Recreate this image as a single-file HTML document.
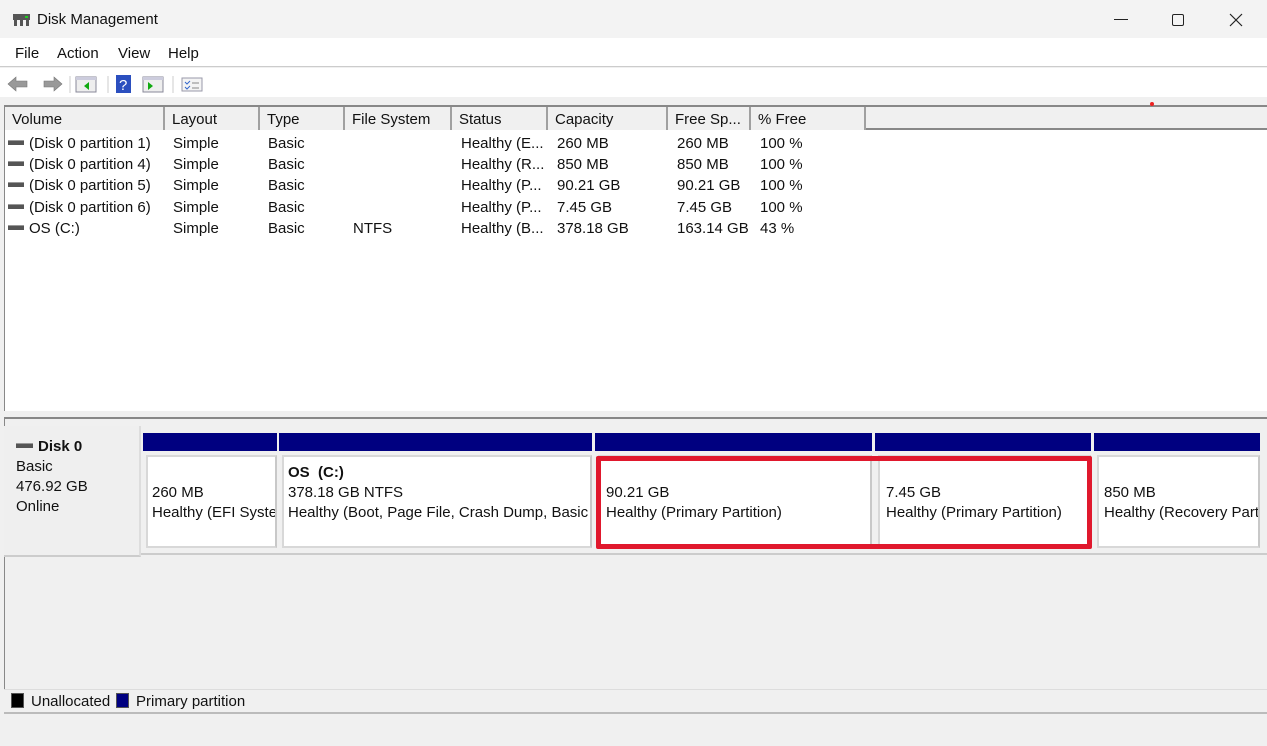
<!DOCTYPE html>
<html><head><style>
*{margin:0;padding:0;box-sizing:border-box}
body{width:1267px;height:746px;overflow:hidden;background:#f0f0f0;font-family:"Liberation Sans",sans-serif;font-size:15px;color:#111;position:relative}
.a{position:absolute;white-space:nowrap}
.hd{position:absolute;top:107px;height:23px;border-right:2px solid #a0a0a0;padding:4px 0 0 7px;background:#f0f0f0}
.bar{position:absolute;top:433px;height:18px;background:#000080}
.box{position:absolute;top:455px;height:93px;background:#fff;border:2px solid #d8d8d8;border-right-color:#c8c8c8;padding:26px 0 0 4px;overflow:hidden;line-height:20px;white-space:nowrap}
.icn{display:inline-block;width:16px;height:5px;background:#555;border-top:1px solid #999;position:relative;top:-3px;margin-right:5px}
</style></head><body>
<div class="a" style="left:0;top:0;width:1267px;height:38px;background:#f3f3f3"></div>
<svg class="a" style="left:12px;top:12px" width="20" height="16"><rect x="1" y="2" width="17" height="6" fill="#555"/><rect x="13" y="4" width="3" height="2" fill="#2c2"/><rect x="2" y="8" width="3" height="6" fill="#555"/><rect x="8" y="8" width="3" height="6" fill="#555"/><rect x="14" y="8" width="3" height="6" fill="#555"/></svg>
<div class="a" style="left:37px;top:11px;font-size:15px">Disk Management</div>
<div class="a" style="left:1114px;top:19px;width:14px;height:1px;background:#222"></div>
<div class="a" style="left:1172px;top:14px;width:12px;height:12px;border:1.3px solid #222;border-radius:2px"></div>
<svg class="a" style="left:1229px;top:13px" width="14" height="14"><path d="M1 1L13 13M13 1L1 13" stroke="#222" stroke-width="1.2"/></svg>
<div class="a" style="left:0;top:38px;width:1267px;height:29px;background:#fff;border-bottom:1px solid #ccc"></div>
<div class="a" style="left:15px;top:45px">File</div>
<div class="a" style="left:57px;top:45px">Action</div>
<div class="a" style="left:118px;top:45px">View</div>
<div class="a" style="left:168px;top:45px">Help</div>
<div class="a" style="left:0;top:68px;width:1267px;height:29px;background:#fff"></div>
<svg class="a" style="left:7px;top:74px" width="200" height="20">
<path d="M1 10L9 3V7H20V13H9V17Z" fill="#999" stroke="#777" stroke-width="0.6"/><path d="M55 10L47 3V7H37V13H47V17Z" fill="#999" stroke="#777" stroke-width="0.6"/>
<line x1="63" y1="2" x2="63" y2="19" stroke="#ccc"/>
<rect x="69" y="3" width="20" height="15" fill="#eee" stroke="#889"/><rect x="69" y="3" width="20" height="3" fill="#ccd"/><path d="M82 8V16L77 12Z" fill="#1a1"/>
<line x1="101" y1="2" x2="101" y2="19" stroke="#ccc"/>
<rect x="109" y="1" width="15" height="18" fill="#2b4fbf"/><text x="112" y="16" fill="#fff" font-size="15" font-family="Liberation Sans">?</text>
<rect x="136" y="3" width="20" height="15" fill="#eee" stroke="#889"/><rect x="136" y="3" width="20" height="3" fill="#ccd"/><path d="M141 8V16L146 12Z" fill="#1a1"/>
<line x1="166" y1="2" x2="166" y2="19" stroke="#ccc"/>
<rect x="175" y="4" width="20" height="13" fill="#f4f4f4" stroke="#99a"/><path d="M178 8l2 2 3-3M178 13l2 2 3-3" stroke="#36c" fill="none"/><path d="M185 9h7M185 14h7" stroke="#888"/>
</svg>
<div class="a" style="left:4px;top:105px;width:1263px;height:306px;background:#fff;border-top:2px solid #888;border-left:1px solid #888"></div>
<div class="a" style="left:5px;top:107px;width:1262px;height:23px;background:#f0f0f0;border-bottom:2px solid #888"></div>
<div class="hd" style="left:5px;width:160px">Volume</div>
<div class="hd" style="left:165px;width:95px">Layout</div>
<div class="hd" style="left:260px;width:85px">Type</div>
<div class="hd" style="left:345px;width:107px">File System</div>
<div class="hd" style="left:452px;width:96px">Status</div>
<div class="hd" style="left:548px;width:120px">Capacity</div>
<div class="hd" style="left:668px;width:83px">Free Sp...</div>
<div class="hd" style="left:751px;width:115px">% Free</div>
<div class="a" style="left:1150px;top:102px;width:4px;height:4px;border-radius:2px;background:#e22"></div>
<div class="a" style="left:8px;top:133px;line-height:21.2px">
<div><span class="icn"></span>(Disk 0 partition 1)</div>
<div><span class="icn"></span>(Disk 0 partition 4)</div>
<div><span class="icn"></span>(Disk 0 partition 5)</div>
<div><span class="icn"></span>(Disk 0 partition 6)</div>
<div><span class="icn"></span>OS (C:)</div></div>
<div class="a" style="left:173px;top:133px;line-height:21.2px">Simple<br>Simple<br>Simple<br>Simple<br>Simple</div>
<div class="a" style="left:268px;top:133px;line-height:21.2px">Basic<br>Basic<br>Basic<br>Basic<br>Basic</div>
<div class="a" style="left:353px;top:133px;line-height:21.2px">&nbsp;<br>&nbsp;<br>&nbsp;<br>&nbsp;<br>NTFS</div>
<div class="a" style="left:461px;top:133px;line-height:21.2px">Healthy (E...<br>Healthy (R...<br>Healthy (P...<br>Healthy (P...<br>Healthy (B...</div>
<div class="a" style="left:557px;top:133px;line-height:21.2px">260 MB<br>850 MB<br>90.21 GB<br>7.45 GB<br>378.18 GB</div>
<div class="a" style="left:677px;top:133px;line-height:21.2px">260 MB<br>850 MB<br>90.21 GB<br>7.45 GB<br>163.14 GB</div>
<div class="a" style="left:760px;top:133px;line-height:21.2px">100 %<br>100 %<br>100 %<br>100 %<br>43 %</div>
<div class="a" style="left:4px;top:411px;width:1263px;height:8px;background:#f0f0f0;border-bottom:2px solid #888"></div>
<div class="a" style="left:4px;top:419px;width:1263px;height:271px;background:#f0f0f0;border-left:1px solid #888"></div>
<div class="a" style="left:4px;top:426px;width:137px;height:131px;background:#efefef;border-right:2px solid #ddd;border-bottom:2px solid #ccc"></div>
<div class="a" style="left:16px;top:437px;line-height:20px"><span class="icn" style="width:17px"></span><b>Disk 0</b><br>Basic<br>476.92 GB<br>Online</div>
<div class="a" style="left:141px;top:553px;width:1126px;height:2px;background:#ccc"></div>
<div class="bar" style="left:143px;width:134px"></div>
<div class="bar" style="left:279px;width:313px"></div>
<div class="bar" style="left:595px;width:277px"></div>
<div class="bar" style="left:875px;width:216px"></div>
<div class="bar" style="left:1094px;width:166px"></div>
<div class="box" style="left:146px;width:131px">260 MB<br>Healthy (EFI System</div>
<div class="box" style="left:282px;width:310px;padding-top:6px"><b>OS&nbsp; (C:)</b><br>378.18 GB NTFS<br>Healthy (Boot, Page File, Crash Dump, Basic Data</div>
<div class="box" style="left:598px;width:274px;padding-left:6px">90.21 GB<br>Healthy (Primary Partition)</div>
<div class="box" style="left:878px;width:213px;padding-left:6px">7.45 GB<br>Healthy (Primary Partition)</div>
<div class="box" style="left:1097px;width:163px;padding-left:5px">850 MB<br>Healthy (Recovery Partition)</div>
<div class="a" style="left:596px;top:456px;width:496px;height:93px;border:5px solid #e0182d;border-radius:2px"></div>
<div class="a" style="left:4px;top:689px;width:1263px;height:25px;background:#f0f0f0;border-top:1px solid #ddd;border-bottom:2px solid #bbb"></div>
<div class="a" style="left:11px;top:693px;width:13px;height:15px;background:#000;border:1px solid #555"></div>
<div class="a" style="left:31px;top:693px">Unallocated</div>
<div class="a" style="left:116px;top:693px;width:13px;height:15px;background:#000080;border:1px solid #555"></div>
<div class="a" style="left:136px;top:693px">Primary partition</div>
</body></html>
